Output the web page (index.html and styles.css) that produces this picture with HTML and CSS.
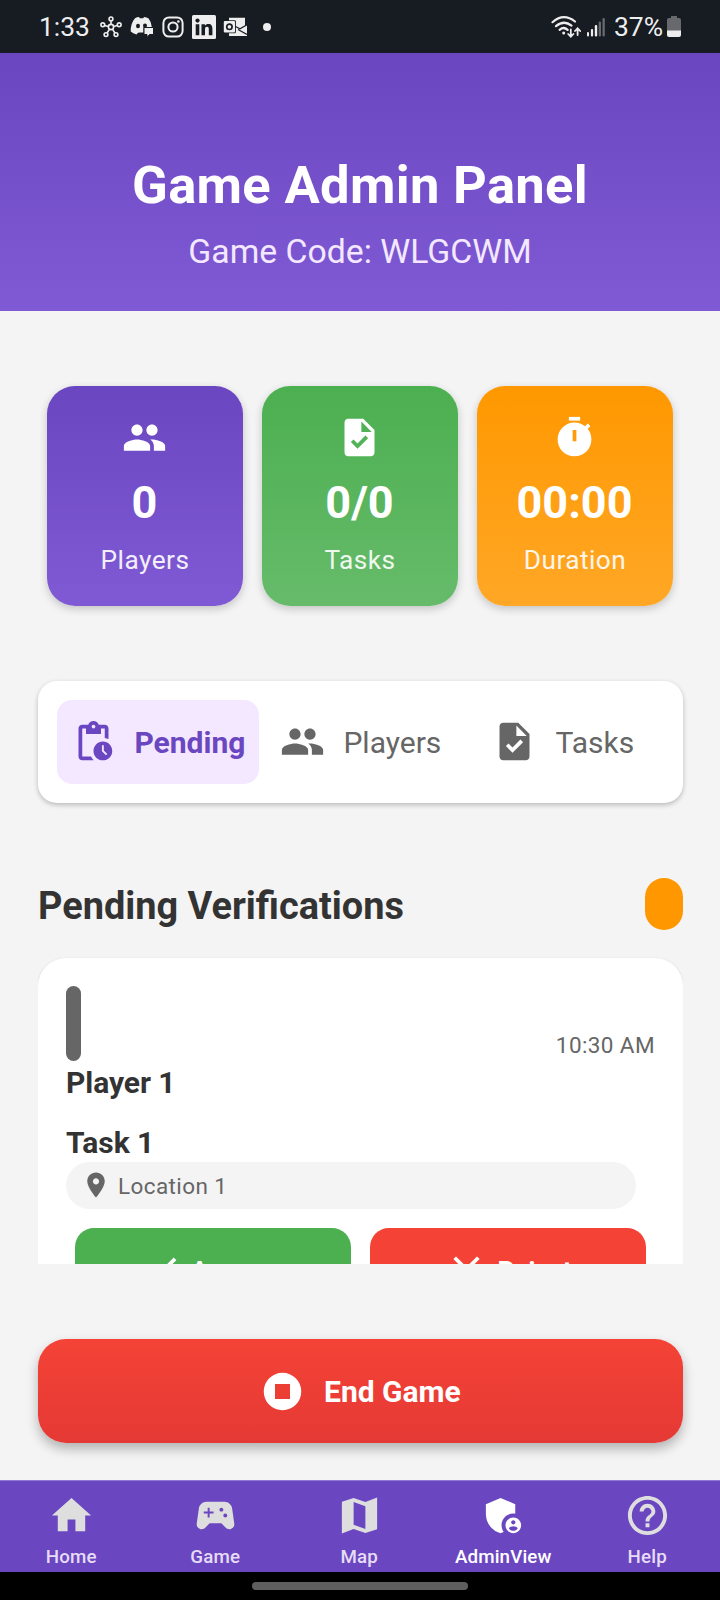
FILE: index.html
```html
<!DOCTYPE html>
<html lang="en">
<head>
<meta charset="utf-8">
<title>Game Admin Panel</title>
<link rel="stylesheet" href="styles.css">
</head>
<body>
<svg class="sprite" aria-hidden="true">
  <symbol id="people" viewBox="0 0 24 24"><path d="M16 11c1.660 0 2.990-1.340 2.990-3S17.660 5 16 5c-1.660 0-3 1.340-3 3s1.340 3 3 3zm-8 0c1.660 0 2.990-1.340 2.990-3S9.660 5 8 5C6.340 5 5 6.340 5 8s1.340 3 3 3zm0 2c-2.330 0-7 1.170-7 3.500V19h14v-2.500c0-2.330-4.670-3.500-7-3.500zm8 0c-.29 0-.62.020-.97.050 1.160.84 1.970 1.970 1.970 3.450V19h6v-2.500c0-2.330-4.670-3.500-7-3.500z"/></symbol>
  <symbol id="task" viewBox="0 0 24 24"><path d="M14 2H6c-1.1 0-1.99.9-1.99 2L4 20c0 1.1.89 2 1.99 2H18c1.1 0 2-.9 2-2V8l-6-6zm-3.06 16L7.4 14.46l1.41-1.41 2.12 2.12 4.24-4.24 1.41 1.41L10.94 18zM13 9V3.5L18.5 9H13z"/></symbol>
  <symbol id="timer" viewBox="0 0 24 24"><path d="M9 1h6v2H9z"/><path fill-rule="evenodd" d="M19.03 7.39l1.42-1.42c-.43-.51-.9-.99-1.41-1.41l-1.42 1.42C16.07 4.74 14.12 4 12 4c-4.97 0-9 4.03-9 9s4.02 9 9 9 9-4.03 9-9c0-2.12-.74-4.07-1.97-5.61zM13 14h-2V8h2v6z"/></symbol>
  <symbol id="pending" viewBox="0 0 24 24"><path d="M17 12c-2.76 0-5 2.24-5 5s2.24 5 5 5 5-2.24 5-5-2.24-5-5-5zm1.65 7.35L16.5 17.2V14h1v2.79l1.85 1.85-.7.71zM18 3h-3.18C14.4 1.84 13.3 1 12 1s-2.4.84-2.82 2H6c-1.1 0-2 .9-2 2v15c0 1.1.9 2 2 2h6.11c-.59-.57-1.07-1.25-1.42-2H6V5h2v3h8V5h2v5.08c.71.1 1.38.31 2 .6V5c0-1.1-.9-2-2-2zm-6 2c-.55 0-1-.45-1-1s.45-1 1-1 1 .45 1 1-.45 1-1 1z"/></symbol>
</svg>

<header class="status-bar">
  <div class="status-left">
    <span class="clock">1:33</span>
    <svg class="s-hub" viewBox="0 0 22 22" fill="none" stroke="#eee" stroke-width="1.6"><circle cx="11" cy="11" r="2.6"/><circle cx="11" cy="2.9" r="1.9"/><circle cx="2.8" cy="8.8" r="1.9"/><circle cx="19.2" cy="8.8" r="1.9"/><circle cx="6" cy="18.6" r="1.9"/><circle cx="16" cy="18.6" r="1.9"/><path d="M11 4.8v3.6M4.6 9.4l3.9 1M17.4 9.4l-3.9 1M7.1 17l2.3-3.7M14.9 17l-2.3-3.7"/></svg>
    <svg class="s-discord" viewBox="0 0 24 22"><path fill="#eee" d="M5 2.3Q7 1 9 1l.8 1.2h3.4L14 1q3 .3 4.600 1.500Q21.500 6 21.800 11H13.500v5.500H10l-2 .2L6.500 18.500Q3 17.500.7 15.500.5 7.500 5 2.300z"/><ellipse cx="8" cy="10" rx="2" ry="2.200" fill="#171b22"/><ellipse cx="15" cy="9.600" rx="2" ry="2.200" fill="#171b22"/><path fill="#eee" stroke="#171b22" stroke-width="1" d="M14 11.500h9.500v7h-4L17 21.500v-3h-3z"/></svg>
    <svg class="s-insta" viewBox="0 0 22 22" fill="none" stroke="#eee" stroke-width="2"><rect x="1.400" y="1.400" width="19.200" height="19.200" rx="5.500"/><circle cx="11" cy="11" r="4.600"/><circle cx="16.400" cy="5.500" r="1.300" fill="#eee" stroke="none"/></svg>
    <svg class="s-linkedin" viewBox="0 0 24 24"><rect width="24" height="24" rx="1.500" fill="#eee"/><g fill="#171b22"><circle cx="5.500" cy="5.600" r="2.100"/><path d="M3.700 9.200h3.600v11H3.700zM9.500 9.200h3.400v1.500c.7-1.200 1.900-1.800 3.400-1.800 3.300 0 4.100 2.100 4.100 5v6.300h-3.600v-5.700c0-1.400-.1-2.700-1.800-2.700s-2 1.300-2 2.700v5.700H9.500z"/></g></svg>
    <svg class="s-outlook" viewBox="0 0 24 20"><path fill="#eee" d="M6 .8h16v8L24 8v11H6z"/><path d="M12.500 9.500l4.500 2.300 7-4M15 12.500l9 5" stroke="#171b22" stroke-width="1.200" fill="none"/><rect x=".3" y="3.200" width="12.600" height="13.100" rx="1.200" fill="#171b22"/><rect x=".8" y="4" width="11.200" height="11.500" rx="1" fill="#eee"/><circle cx="6.400" cy="9.800" r="2.700" fill="none" stroke="#171b22" stroke-width="1.700"/></svg>
    <i class="dot"></i>
  </div>
  <div class="status-right">
    <svg class="s-wifi" viewBox="0 0 30 24" fill="none" stroke="#eee" stroke-linecap="round"><path stroke-width="2.200" d="M1.500 7.200Q12.500-2.600 24 6.500M5 11.200q7.800-6.600 15.500-.6M8.600 14.800q4.200-3.600 8 .1"/><circle cx="12.700" cy="18" r="1.500" fill="#eee" stroke="none"/><path stroke-width="1.800" d="M19.800 14.500v7M17.200 19l2.600 2.700 2.600-2.700M26.600 20v-6.500M24 16l2.600-2.700 2.600 2.700"/></svg>
    <svg class="s-signal" viewBox="0 0 18 20"><g fill="#eee"><rect x="0" y="15" width="2" height="4.500" rx="1"/><rect x="3.900" y="12" width="2.200" height="7.500" rx="1"/><rect x="7.800" y="8" width="2.400" height="11.500" rx="1"/></g><g fill="#676a6f"><rect x="11.700" y="4.500" width="2.300" height="15" rx="1"/><rect x="15.500" y="1" width="2.300" height="18.500" rx="1"/></g></svg>
    <span class="battery-text">37%</span>
    <svg class="s-battery" viewBox="0 0 14 21"><path fill="#67696d" d="M4 0h6v2h2q2 0 2 2v11H0V4q0-2 2-2h2z"/><path fill="#eee" d="M0 14.500h14V19q0 2-2 2H2q-2 0-2-2z"/></svg>
  </div>
</header>

<section class="hero">
  <h1>Game Admin Panel</h1>
  <p>Game Code: WLGCWM</p>
</section>

<main class="content">
  <section class="stats">
    <div class="stat purple"><svg class="icon"><use href="#people"/></svg><strong>0</strong><span>Players</span></div>
    <div class="stat green"><svg class="icon"><use href="#task"/></svg><strong>0/0</strong><span>Tasks</span></div>
    <div class="stat orange"><svg class="icon"><use href="#timer"/></svg><strong>00:00</strong><span>Duration</span></div>
  </section>

  <nav class="tabs">
    <a class="tab active"><svg class="icon"><use href="#pending"/></svg><span>Pending</span></a>
    <a class="tab"><svg class="icon"><use href="#people"/></svg><span>Players</span></a>
    <a class="tab"><svg class="icon"><use href="#task"/></svg><span>Tasks</span></a>
  </nav>

  <section class="verifications">
    <div class="section-head"><h2>Pending Verifications</h2><i class="badge"></i></div>
    <article class="card">
      <div class="card-head">
        <div class="player"><i class="avatar"></i><b>Player 1</b></div>
        <time>10:30 AM</time>
      </div>
      <b class="task-name">Task 1</b>
      <div class="location">
        <svg viewBox="0 0 24 24"><path d="M12 2C8.130 2 5 5.130 5 9c0 5.250 7 13 7 13s7-7.750 7-13c0-3.870-3.130-7-7-7zm0 9.500c-1.380 0-2.500-1.120-2.500-2.500s1.120-2.500 2.500-2.500 2.500 1.120 2.500 2.500-1.120 2.500-2.500 2.500z"/></svg>
        <span>Location 1</span>
      </div>
      <div class="actions">
        <button class="approve"><svg class="icon" viewBox="0 0 24 24"><path d="M9 16.170L4.830 12l-1.420 1.410L9 19 21 7l-1.410-1.410z"/></svg><span>Approve</span></button>
        <button class="reject"><svg class="icon" viewBox="0 0 24 24"><path d="M19 6.410L17.590 5 12 10.590 6.410 5 5 6.410 10.590 12 5 17.590 6.410 19 12 13.410 17.590 19 19 17.590 13.410 12z"/></svg><span>Reject</span></button>
      </div>
    </article>
  </section>

  <button class="end-game"><svg class="icon" viewBox="0 0 24 24"><path fill-rule="evenodd" d="M12 2a10 10 0 1 0 0 20 10 10 0 0 0 0-20zM8 8h8v8H8z"/></svg><span>End Game</span></button>
</main>

<nav class="bottom-nav">
  <a><svg viewBox="0 0 24 24"><path d="M10 20v-6h4v6h5v-8h3L12 3 2 12h3v8z"/></svg><span>Home</span></a>
  <a><svg viewBox="0 0 24 24"><path d="M21.580 16.090l-1.090-7.660C20.210 6.460 18.520 5 16.530 5H7.470C5.480 5 3.790 6.460 3.510 8.430l-1.090 7.660C2.200 17.630 3.390 19 4.940 19c.68 0 1.320-.27 1.800-.75L9 16h6l2.250 2.250c.48.48 1.130.75 1.800.75 1.560 0 2.750-1.370 2.530-2.910zM11 11H9v2H8v-2H6v-1h2V8h1v2h2v1zm4-1c-.55 0-1-.45-1-1s.45-1 1-1 1 .45 1 1-.45 1-1 1zm2 3c-.55 0-1-.45-1-1s.45-1 1-1 1 .45 1 1-.45 1-1 1z"/></svg><span>Game</span></a>
  <a><svg viewBox="0 0 24 24"><path fill-rule="evenodd" d="M15 5.100L9 3 3 5.020v16.200l6-2.330 6 2.100 6-2.020V2.770L15 5.100zm0 13.790l-6-2.110V5.110l6 2.110v11.670z"/></svg><span>Map</span></a>
  <a class="current"><svg viewBox="0 0 24 24"><path d="M17 11c.34 0 .67.040 1 .09V6.270L10.500 3 3 6.270v4.910c0 4.540 3.200 8.790 7.500 9.820.55-.13 1.080-.32 1.600-.55-.69-.98-1.100-2.170-1.100-3.450 0-3.310 2.690-6 6-6z"/><path d="M17 13c-2.210 0-4 1.790-4 4s1.790 4 4 4 4-1.790 4-4-1.790-4-4-4zm0 1.380c.62 0 1.120.51 1.120 1.120s-.51 1.120-1.120 1.120-1.120-.51-1.120-1.120.5-1.120 1.120-1.120zm0 5.370c-.93 0-1.740-.46-2.240-1.170.05-.72 1.510-1.080 2.240-1.080s2.190.36 2.240 1.080c-.5.71-1.310 1.170-2.240 1.170z"/></svg><span>AdminView</span></a>
  <a><svg viewBox="0 0 24 24"><path d="M11 18h2v-2h-2v2zm1-16C6.480 2 2 6.480 2 12s4.480 10 10 10 10-4.480 10-10S17.520 2 12 2zm0 18c-4.410 0-8-3.590-8-8s3.590-8 8-8 8 3.590 8 8-3.590 8-8 8zm0-14c-2.210 0-4 1.790-4 4h2c0-1.100.9-2 2-2s2 .9 2 2c0 2-3 1.750-3 5h2c0-2.250 3-2.500 3-5 0-2.210-1.790-4-4-4z"/></svg><span>Help</span></a>
</nav>
<footer class="gesture"><i></i></footer>
</body>
</html>
```
FILE: styles.css
```css
* { box-sizing: border-box; }
body {
  margin: 0;
  width: 720px;
  height: 1600px;
  overflow: hidden;
  display: flex;
  flex-direction: column;
  background: #f4f4f4;
  color: #333;
  font-family: Roboto, "Liberation Sans", sans-serif;
}
h1, h2, p { margin: 0; }
i { display: block; }
svg { display: block; flex: none; fill: currentColor; }
button { border: 0; margin: 0; padding: 0; font: inherit; color: #fff; }
.sprite { position: absolute; width: 0; height: 0; }
.icon { width: 45px; height: 45px; }

/* Status bar */
.status-bar {
  flex: none;
  height: 53px;
  padding: 0 39px 0 39px;
  display: flex;
  justify-content: space-between;
  align-items: center;
  background: #171b22;
  color: #eee;
  font-size: 26.4px;
}
.status-left, .status-right { display: flex; align-items: center; }
.clock { width: 61px; }
.status-bar svg { fill: none; }
.s-hub { width: 22px; height: 22px; margin-right: 8px; }
.s-discord { width: 24px; height: 22px; margin-right: 8px; }
.s-insta { width: 22px; height: 22px; margin-right: 8px; }
.s-linkedin { width: 24px; height: 24px; margin-right: 7px; }
.s-outlook { width: 24px; height: 20px; margin-right: 16px; }
.dot { width: 8px; height: 8px; border-radius: 50%; background: #eee; }
.s-wifi { width: 30px; height: 24px; margin-right: 6px; }
.s-signal { width: 18px; height: 20px; margin-right: 9px; }
.battery-text { margin-right: 4px; }
.s-battery { width: 14px; height: 21px; }

/* Title banner */
.hero {
  flex: none;
  height: 258px;
  padding-top: 101px;
  display: flex;
  flex-direction: column;
  align-items: center;
  gap: 16px;
  background: linear-gradient(#6b46c1, #805ad5);
  color: #fff;
}
.hero h1 { font-size: 52.5px; line-height: 62px; font-weight: 700; letter-spacing: .32px; }
.hero p { font-size: 33.75px; line-height: 39px; color: #f3e8ff; }

.content {
  flex: 1;
  display: flex;
  flex-direction: column;
  padding: 75px 37px 0 38px;
}

/* Stat tiles */
.stats {
  flex: none;
  display: grid;
  grid-template-columns: repeat(3, 1fr);
  gap: 19px;
  padding: 0 10px 0 9px;
}
.stat {
  height: 220px;
  padding-top: 29px;
  display: flex;
  flex-direction: column;
  align-items: center;
  border-radius: 28px;
  color: #fff;
  box-shadow: 0 3px 8px rgba(0, 0, 0, .2);
}
.stat .icon { margin-right: 2px; }
.stat strong { margin-top: 16px; margin-right: 1px; font-size: 45px; line-height: 53px; }
.stat span { margin-top: 16px; font-size: 26.25px; line-height: 31px; letter-spacing: .45px; opacity: .9; }
.purple { background: linear-gradient(#6b46c1, #805ad5); }
.green { background: linear-gradient(#4caf50, #66bb6a); }
.orange { background: linear-gradient(#ff9800, #ffa726); }

/* Tab switcher */
.tabs {
  flex: none;
  height: 122px;
  margin-top: 75px;
  padding: 18.75px;
  display: grid;
  grid-template-columns: repeat(3, 1fr);
  background: #fff;
  border-radius: 19px;
  box-shadow: 0 2px 5px rgba(0, 0, 0, .24);
}
.tab {
  display: flex;
  align-items: center;
  justify-content: center;
  gap: 18.75px;
  border-radius: 15px;
  color: #666;
  font-size: 30px;
}
.tab .icon { margin-bottom: 2px; }
.active { background: #f3e8ff; color: #6b46c1; font-weight: 700; }

/* Verification list, cut off at the bottom of its viewport */
.verifications {
  flex: none;
  height: 386px;
  margin-top: 75px;
  overflow: hidden;
}
.section-head { height: 52px; display: flex; justify-content: space-between; align-items: center; }
.section-head h2 { font-size: 37.9px; line-height: 44px; padding-top: 3px; }
.badge { width: 38px; height: 52px; border-radius: 19px; background: #ff9800; }
.card {
  margin-top: 28px;
  height: 450px;
  padding: 28px;
  background: #fff;
  border-radius: 28px;
  box-shadow: 0 1px 3px rgba(0, 0, 0, .16);
  font-size: 30px;
}
.card-head { display: flex; justify-content: space-between; align-items: center; height: 115px; }
.avatar { width: 15px; height: 75px; border-radius: 7.5px; background: #666; margin-bottom: 4px; }
.player b, .task-name { display: block; line-height: 36px; letter-spacing: -.05px; }
.card time { font-size: 22.5px; letter-spacing: .4px; color: #666; padding-top: 3px; }
.task-name { margin-top: 24px; }
.location {
  width: 570px;
  height: 47px;
  margin-top: 1px;
  padding-left: 15px;
  display: flex;
  align-items: center;
  gap: 7px;
  border-radius: 23.5px;
  background: #f4f4f4;
  color: #666;
  font-size: 22.5px;
  letter-spacing: .4px;
}
.location svg { width: 30px; height: 30px; margin-bottom: 2px; }
.actions { display: flex; gap: 19px; margin: 19px 9px 0; }
.actions button {
  width: 276px;
  height: 83px;
  display: flex;
  align-items: center;
  justify-content: center;
  gap: 9.4px;
  border-radius: 19px;
  font-size: 26.25px;
  font-weight: 700;
}
.actions .icon { margin-right: -1px; }
.actions span { padding-top: 2px; }
.approve { background: #4caf50; }
.reject { background: #f44336; }

.end-game {
  flex: none;
  height: 104px;
  margin-top: 75px;
  display: flex;
  align-items: center;
  justify-content: center;
  gap: 18.75px;
  border-radius: 28px;
  background: linear-gradient(#f44336, #e53935);
  box-shadow: 0 6px 12px rgba(0, 0, 0, .27);
  font-size: 30px;
  font-weight: 700;
}

/* Bottom navigation */
.bottom-nav {
  flex: none;
  height: 92px;
  display: grid;
  grid-template-columns: repeat(5, 1fr);
  background: #6b46c1;
  border-top: 1px solid #9178d0;
}
.bottom-nav a {
  display: flex;
  flex-direction: column;
  align-items: center;
  padding: 11px 1.500px 0 0;
  color: #dedede;
  font-size: 18.75px;
  font-weight: 500;
}
.bottom-nav svg { width: 47px; height: 47px; }
.bottom-nav span { margin-top: 7px; line-height: 22px; letter-spacing: .15px; color: #e6dcf5; }
.bottom-nav .current, .bottom-nav .current span { color: #fff; }

.gesture { flex: none; height: 28px; padding-top: 10px; background: #000; }
.gesture i { width: 216px; height: 8px; margin: 0 auto; border-radius: 4px; background: #5e5e5e; }
```
